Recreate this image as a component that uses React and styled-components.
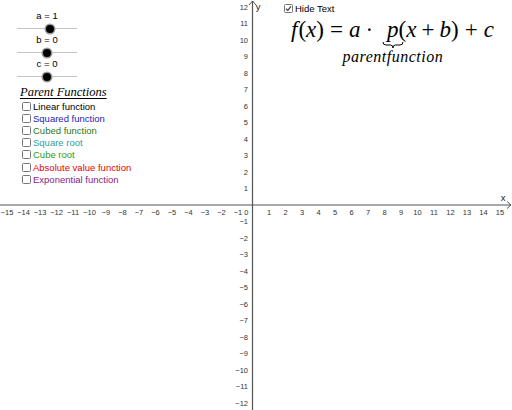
import React from 'react';
import styled, { createGlobalStyle } from 'styled-components';

const Global = createGlobalStyle`
  html, body { margin: 0; padding: 0; background: #fff; }
  body { font-family: "Liberation Sans", Arial, sans-serif; }
`;

const UNIT = 16.5;
const OX = 252.5;
const OY = 205;

const Stage = styled.div`
  position: relative;
  width: 512px;
  height: 410px;
  overflow: hidden;
  background: #fff;
`;

const Canvas = styled.svg`
  position: absolute;
  inset: 0;
  display: block;
`;

const Panel = styled.div`
  position: relative;
  display: flex;
  flex-direction: column;
  align-items: flex-start;
  padding: 10px 0 0 17px;
  width: 120px;
`;

const SliderBlock = styled.div`
  display: flex;
  flex-direction: column;
  width: 60px;
`;

const SliderLabel = styled.div`
  height: 12px;
  line-height: 12px;
  font-size: 9.5px;
  text-align: center;
  color: #000;
`;

const Track = styled.div`
  position: relative;
  height: 12px;
  &::before {
    content: '';
    position: absolute;
    left: 0;
    right: 0;
    top: 6px;
    height: 1px;
    background: #c4c4c4;
  }
`;

const Knob = styled.span`
  position: absolute;
  top: 6.5px;
  width: 8px;
  height: 8px;
  border-radius: 50%;
  background: #000;
  box-shadow: 0 0 0 1.5px #9a9a9a;
  transform: translate(-50%, -50%);
`;

const Title = styled.div`
  margin: 3px 0 1px 3px;
  height: 14px;
  line-height: 14px;
  font-family: "Liberation Serif", "Times New Roman", serif;
  font-style: italic;
  font-size: 12.5px;
  color: #000;
  text-decoration: underline;
  text-underline-offset: 2px;
  text-decoration-thickness: 1px;
`;

const Row = styled.label`
  display: flex;
  align-items: center;
  height: 12.2px;
  margin-left: 5px;
  font-size: 9.5px;
  color: ${p => p.$color};
  white-space: nowrap;
`;

const Box = styled.span`
  display: inline-flex;
  align-items: center;
  justify-content: center;
  box-sizing: border-box;
  width: 9px;
  height: 9px;
  margin-right: 2px;
  border: 1px solid #777;
  border-radius: 1.5px;
  background: #fff;
  flex: none;
`;

const HideToggle = styled.label`
  position: absolute;
  left: 284px;
  top: 3px;
  display: flex;
  align-items: center;
  height: 11px;
  font-size: 9.5px;
  color: #000;
`;

const Formula = styled.div`
  position: absolute;
  left: 291px;
  top: 17px;
  display: flex;
  align-items: baseline;
  font-family: "Liberation Serif", "Times New Roman", serif;
  font-size: 23px;
  line-height: 26px;
  color: #000;
  white-space: nowrap;
`;

const MI = styled.span`
  font-style: italic;
  padding-right: ${p => p.$pr || 0}px;
`;

const MO = styled.span`
  margin: 0 ${p => p.$m || 0}px;
`;

const BraceWrap = styled.span`
  position: relative;
  display: inline-block;
  margin-left: 9px;
`;

const BraceSvg = styled.svg`
  position: absolute;
  left: 50%;
  top: 100%;
  margin-top: -2px;
  transform: translateX(-50%);
`;

const BraceLabel = styled.span`
  position: absolute;
  left: 50%;
  top: 100%;
  margin-top: 6px;
  transform: translateX(-50%);
  font-style: italic;
  font-size: 16px;
  line-height: 16px;
  letter-spacing: 0.5px;
`;

const sliders = [
  { name: 'a', value: 1, pos: 33 },
  { name: 'b', value: 0, pos: 30 },
  { name: 'c', value: 0, pos: 30 },
];

const functions = [
  { label: 'Linear function', color: '#000000' },
  { label: 'Squared function', color: '#2222b8' },
  { label: 'Cubed function', color: '#1d7a1d' },
  { label: 'Square root', color: '#1fa3a3' },
  { label: 'Cube root', color: '#1f9c1f' },
  { label: 'Absolute value function', color: '#e60000' },
  { label: 'Exponential function', color: '#8a1a8a' },
];

const minus = n => (n < 0 ? '\u2212' + Math.abs(n) : String(n));

function Axes() {
  const xs = [];
  for (let i = -15; i <= 15; i++) if (i !== 0) xs.push(i);
  const ys = [];
  for (let i = -12; i <= 12; i++) if (i !== 0) ys.push(i);
  const labelStyle = { fontFamily: '"Liberation Sans", Arial, sans-serif', fontSize: 7.5, fill: '#333' };
  return (
    <Canvas width="512" height="410" viewBox="0 0 512 410">
      <line x1="0" y1={OY} x2="511" y2={OY} stroke="#555" strokeWidth="1.2" />
      <line x1={OX} y1="1" x2={OX} y2="410" stroke="#555" strokeWidth="1.2" />
      <polyline points={`507,${OY - 3.5} 511,${OY} 507,${OY + 3.5}`} fill="none" stroke="#555" strokeWidth="1" />
      <polyline points={`${OX - 3.5},5 ${OX},1 ${OX + 3.5},5`} fill="none" stroke="#555" strokeWidth="1" />
      <text x="503" y="201" style={{ ...labelStyle, fontSize: 9.5, fill: '#222' }} textAnchor="middle">x</text>
      <text x="258" y="10" style={{ ...labelStyle, fontSize: 9.5, fill: '#222' }} textAnchor="middle">y</text>
      {xs.map(i => (
        <text key={'x' + i} x={OX + i * UNIT + (i < 0 ? 2 : 0)} y={OY + 9.5} textAnchor="middle" style={labelStyle}>
          {minus(i)}
        </text>
      ))}
      <text x={OX - 4} y={OY + 9.5} textAnchor="end" style={labelStyle}>0</text>
      {ys.map(i => (
        <text key={'y' + i} x={OX - 4.5} y={OY - i * UNIT + 2.7} textAnchor="end" style={labelStyle}>
          {minus(i)}
        </text>
      ))}
    </Canvas>
  );
}

export default function App() {
  return (
    <Stage>
      <Global />
      <Axes />
      <Panel>
        {sliders.map(s => (
          <SliderBlock key={s.name}>
            <SliderLabel>{s.name} = {s.value}</SliderLabel>
            <Track>
              <Knob style={{ left: s.pos }} />
            </Track>
          </SliderBlock>
        ))}
        <Title>Parent Functions</Title>
        {functions.map(f => (
          <Row key={f.label} $color={f.color}>
            <Box />
            {f.label}
          </Row>
        ))}
      </Panel>
      <HideToggle>
        <Box>
          <svg width="7" height="7" viewBox="0 0 7 7">
            <polyline points="1,3.6 2.8,5.4 6,1.3" fill="none" stroke="#333" strokeWidth="1.1" />
          </svg>
        </Box>
        Hide Text
      </HideToggle>
      <Formula>
        <MI $pr={1}>f</MI>
        <MO>(</MO>
        <MI>x</MI>
        <MO>)</MO>
        <MO $m={6}>=</MO>
        <MI>a</MI>
        <MO $m={5}>·</MO>
        <BraceWrap>
          <MI>p</MI>
          <BraceSvg width="22" height="8" viewBox="0 0 22 8">
            <path d="M1,1 Q1,4 4,4 L8.5,4 Q11,4 11,7 Q11,4 13.5,4 L18,4 Q21,4 21,1" fill="none" stroke="#000" strokeWidth="1" />
          </BraceSvg>
          <BraceLabel>parentfunction</BraceLabel>
        </BraceWrap>
        <MO>(</MO>
        <MI>x</MI>
        <MO $m={5}>+</MO>
        <MI>b</MI>
        <MO>)</MO>
        <MO $m={6}>+</MO>
        <MI>c</MI>
      </Formula>
    </Stage>
  );
}
